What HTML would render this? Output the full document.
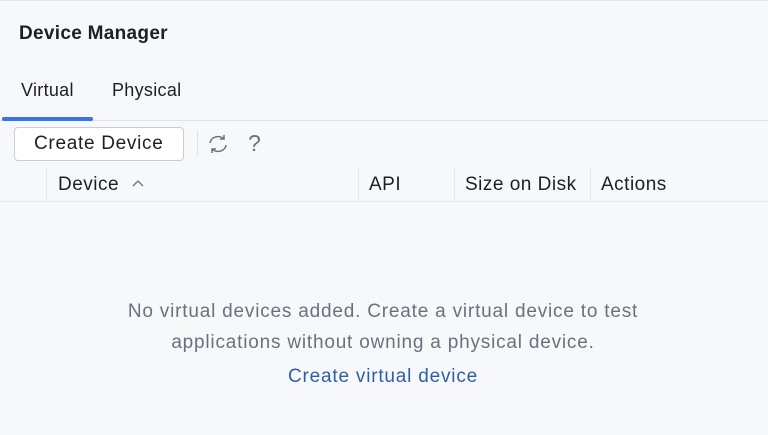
<!DOCTYPE html><html><head><style>
body{margin:0;width:768px;height:435px;background:#f7f8fa;font-family:"Liberation Sans",sans-serif;position:relative;overflow:hidden;color:#1e1f22}
.a{position:absolute;white-space:nowrap}
.h{font-size:19px;letter-spacing:.5px}
</style></head><body>
<div class="a" style="left:0;top:0;width:768px;height:1px;background:#e4e5e8"></div>
<div class="a" style="left:19px;top:23px;font-size:19px;letter-spacing:.3px;font-weight:bold">Device Manager</div>
<div class="a" style="left:21px;top:80px;font-size:18px;letter-spacing:.3px">Virtual</div>
<div class="a" style="left:112px;top:80px;font-size:18px;letter-spacing:.3px">Physical</div>
<div class="a" style="left:0;top:120px;width:768px;height:1px;background:#e0e2e6"></div>
<div class="a" style="left:2px;top:117px;width:91px;height:4px;border-radius:2px;background:#3574f0"></div>
<div class="a" style="left:14px;top:127px;width:168px;height:32px;border:1px solid #c9ccd6;border-radius:4px;background:#fff"></div>
<div class="a" style="left:34px;top:133px;font-size:19px;letter-spacing:.7px">Create Device</div>
<div class="a" style="left:197px;top:130px;width:1px;height:26px;background:#e0e2e6"></div>
<svg class="a" style="left:206px;top:133px" width="24" height="22" viewBox="0 0 24 22" fill="none" stroke="#6c707e" stroke-width="1.5"><path d="M4 10a8 7 0 0 1 14-4M20 12a8 7 0 0 1-14 4"/><path d="M18 2v4h-4M6 20v-4h4"/></svg>
<div class="a" style="left:248px;top:130px;font-size:23px;color:#6c707e">?</div>
<div class="a" style="left:46px;top:168px;width:1px;height:32px;background:#e6e7ea"></div>
<div class="a" style="left:358px;top:168px;width:1px;height:32px;background:#e6e7ea"></div>
<div class="a" style="left:454px;top:168px;width:1px;height:32px;background:#e6e7ea"></div>
<div class="a" style="left:590px;top:168px;width:1px;height:32px;background:#e6e7ea"></div>
<div class="a h" style="left:58px;top:174px">Device</div>
<svg class="a" style="left:131px;top:179px" width="14" height="10" viewBox="0 0 14 10" fill="none" stroke="#6c707e" stroke-width="1.3"><path d="M2 7l5-5 5 5"/></svg>
<div class="a h" style="left:369px;top:174px">API</div>
<div class="a h" style="left:465px;top:174px">Size on Disk</div>
<div class="a h" style="left:601px;top:174px">Actions</div>
<div class="a" style="left:0;top:201px;width:768px;height:1px;background:#e6e7ea"></div>
<div class="a" style="left:0;top:296px;width:766px;text-align:center;font-size:19px;letter-spacing:.8px;color:#6c707e;line-height:31px">No virtual devices added. Create a virtual device to test<br>applications without owning a physical device.</div>
<div class="a" style="left:0;top:366px;width:766px;text-align:center;font-size:19px;letter-spacing:.8px;color:#2f5ea8">Create virtual device</div>
</body></html>
